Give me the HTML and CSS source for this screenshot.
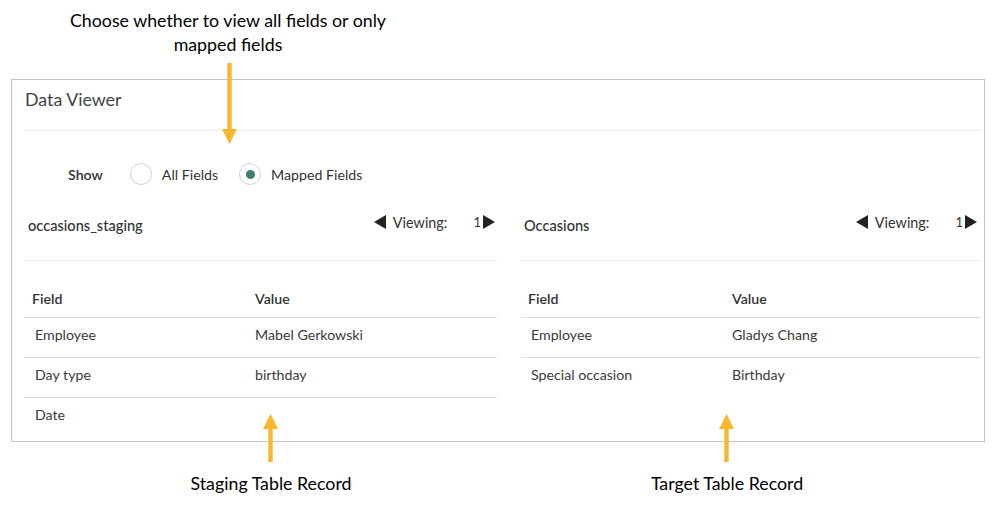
FILE: index.html
```html
<!DOCTYPE html>
<html lang="en">

<head>
    <meta charset="UTF-8">
    <meta name="viewport" content="width=device-width, initial-scale=1.0">
    <title>Data Viewer</title>
    <link rel="stylesheet" href="styles.css">
</head>

<body>
    <div class="page">
        <div class="callout-top">Choose whether to view all fields or only mapped fields</div>

        <div class="panel">
            <div class="panel-title">Data Viewer</div>

            <div class="panel-body">
                <div class="show-row">
                    <span class="show-label">Show</span>
                    <label class="radio">
                        <span class="radio-circle"></span>
                        <span>All Fields</span>
                    </label>
                    <label class="radio">
                        <span class="radio-circle checked"></span>
                        <span>Mapped Fields</span>
                    </label>
                </div>

                <div class="records">
                    <div class="record record-staging">
                        <div class="record-head">
                            <span class="record-name">occasions_staging</span>
                            <span class="viewing">
                                <span class="tri-left"></span>
                                <span class="viewing-label">Viewing:</span>
                                <span class="viewing-num">1</span>
                                <span class="tri-right"></span>
                            </span>
                        </div>
                        <div class="table">
                            <div class="row row-head">
                                <span class="cell-field">Field</span>
                                <span class="cell-value">Value</span>
                            </div>
                            <div class="row">
                                <span class="cell-field">Employee</span>
                                <span class="cell-value">Mabel Gerkowski</span>
                            </div>
                            <div class="row">
                                <span class="cell-field">Day type</span>
                                <span class="cell-value">birthday</span>
                            </div>
                            <div class="row">
                                <span class="cell-field">Date</span>
                                <span class="cell-value"></span>
                            </div>
                        </div>
                    </div>

                    <div class="record record-target">
                        <div class="record-head">
                            <span class="record-name">Occasions</span>
                            <span class="viewing">
                                <span class="tri-left"></span>
                                <span class="viewing-label">Viewing:</span>
                                <span class="viewing-num">1</span>
                                <span class="tri-right"></span>
                            </span>
                        </div>
                        <div class="table">
                            <div class="row row-head">
                                <span class="cell-field">Field</span>
                                <span class="cell-value">Value</span>
                            </div>
                            <div class="row">
                                <span class="cell-field">Employee</span>
                                <span class="cell-value">Gladys Chang</span>
                            </div>
                            <div class="row">
                                <span class="cell-field">Special occasion</span>
                                <span class="cell-value">Birthday</span>
                            </div>
                        </div>
                    </div>
                </div>
            </div>
        </div>

        <div class="callout-bottom">
            <span>Staging Table Record</span>
            <span>Target Table Record</span>
        </div>

        <!-- annotation arrows -->
        <svg class="arrow arrow-down" width="15" height="81" viewBox="0 0 15 81">
            <rect x="5.3" y="0" width="4.4" height="68" fill="#f8b62d" />
            <polygon points="0,66 15,66 7.5,81" fill="#f8b62d" />
        </svg>
        <svg class="arrow arrow-up arrow-staging" width="15" height="48" viewBox="0 0 15 48">
            <polygon points="7.5,0 15,15 0,15" fill="#f8b62d" />
            <rect x="5.3" y="13" width="4.4" height="35" fill="#f8b62d" />
        </svg>
        <svg class="arrow arrow-up arrow-target" width="15" height="48" viewBox="0 0 15 48">
            <polygon points="7.5,0 15,15 0,15" fill="#f8b62d" />
            <rect x="5.3" y="13" width="4.4" height="35" fill="#f8b62d" />
        </svg>
    </div>
</body>

</html>
```

FILE: styles.css
```css
body {
    margin: 0;
    background-color: #fff;
    font-family: Lato, "Open Sans", sans-serif;
    color: #333;
}

.page {
    position: relative;
    width: 992px;
    height: 520px;
    overflow: hidden;
}

/* Annotations */
.callout-top {
    width: 380px;
    margin-left: 38px;
    padding-top: 8px;
    text-align: center;
    font-size: 17.8px;
    line-height: 24px;
    color: #000;
}

.callout-bottom {
    display: grid;
    grid-template-columns: 542px 370px;
    margin-top: 29px;
    font-size: 17.8px;
    line-height: 24px;
    color: #000;
    text-align: center;
}

.arrow {
    position: absolute;
}

.arrow-down {
    left: 222px;
    top: 63px;
}

.arrow-staging {
    left: 263px;
    top: 414px;
}

.arrow-target {
    left: 719px;
    top: 414px;
}

/* Panel */
.panel {
    box-sizing: border-box;
    width: 974px;
    height: 363px;
    margin: 23px 0 0 11px;
    border: 1px solid #c4c4c4;
}

.panel-title {
    height: 50px;
    margin: 0 4px 0 12px;
    padding-left: 1px;
    line-height: 38px;
    font-size: 17.8px;
    color: #444;
    border-bottom: 1px solid #ececec;
}

.panel-body {
    margin: 0 4px 0 12px;
}

.show-row {
    display: flex;
    align-items: center;
    height: 44px;
    margin-top: 21px;
    padding-left: 44px;
    font-size: 14.2px;
}

.show-label {
    font-weight: 600;
    color: #333;
    margin-right: 27px;
}

.radio {
    display: flex;
    align-items: center;
    margin-right: 21px;
    color: #333;
}

.radio-circle {
    box-sizing: border-box;
    width: 22px;
    height: 22px;
    margin-right: 10px;
    border: 1px solid #d2d2d2;
    border-radius: 50%;
    display: flex;
    align-items: center;
    justify-content: center;
}

.radio-circle.checked::after {
    content: "";
    width: 9px;
    height: 9px;
    border-radius: 50%;
    background-color: #3e7e6f;
}

/* Records */
.records {
    display: grid;
    grid-template-columns: 473px 459px;
    column-gap: 24px;
}

.record-head {
    display: flex;
    align-items: center;
    justify-content: space-between;
    height: 64px;
    border-bottom: 1px solid #ececec;
    font-size: 14px;
}

.record-staging .record-head {
    padding: 0 2px 0 4px;
}

.record-target .record-head {
    padding: 0 3px 0 3px;
}

.record-name {
    font-size: 14.6px;
    font-weight: 500;
    color: #333;
    margin-bottom: 5px;
}

.viewing {
    display: flex;
    align-items: center;
    margin-bottom: 12px;
    color: #333;
}

.tri-left {
    width: 0;
    height: 0;
    border-top: 7px solid transparent;
    border-bottom: 7px solid transparent;
    border-right: 12px solid #222;
    margin-right: 7px;
}

.tri-right {
    width: 0;
    height: 0;
    border-top: 7px solid transparent;
    border-bottom: 7px solid transparent;
    border-left: 12px solid #222;
    margin-left: 2px;
}

.viewing-label {
    font-size: 14.4px;
}

.viewing-num {
    margin-left: 26px;
    font-size: 13px;
}

/* Tables */
.table {
    font-size: 14.2px;
}

.row {
    display: grid;
    height: 40px;
    line-height: 20px;
    padding-top: 7px;
    box-sizing: border-box;
    border-bottom: 1px solid #dcdcdc;
    color: #3a3a3a;
}

.row:last-child {
    border-bottom: none;
}

.record-staging .row {
    grid-template-columns: 231px 1fr;
}

.record-target .row {
    grid-template-columns: 211px 1fr;
}

.row .cell-field {
    padding-left: 11px;
}

.record-target .row .cell-field {
    padding-left: 10px;
}

.row-head {
    height: 57px;
    padding-top: 28px;
    font-weight: 600;
    color: #333;
}

.row-head .cell-field {
    padding-left: 8px;
}

.record-target .row-head .cell-field {
    padding-left: 7px;
}
```
